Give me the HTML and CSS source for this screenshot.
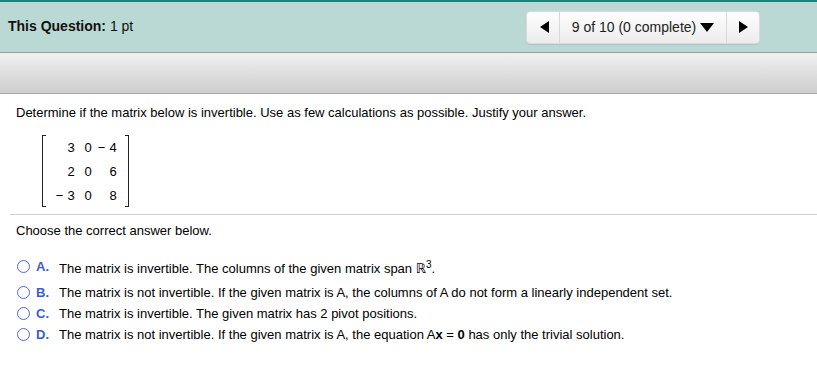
FILE: index.html
```html
<!DOCTYPE html>
<html>
<head>
<meta charset="utf-8">
<link rel="stylesheet" href="styles.css">
</head>
<body>
<div class="topbar">
  <div class="qinfo"><b>This Question:</b> 1 pt</div>
  <div class="navgroup">
    <div class="navbtn arrow"><span class="tri-left"></span></div>
    <div class="navbtn mid">9 of 10 (0 complete) <span class="tri-down"></span></div>
    <div class="navbtn arrow"><span class="tri-right"></span></div>
  </div>
</div>
<div class="toolbar"></div>
<div class="content">
  <p class="prompt">Determine if the matrix below is invertible. Use as few calculations as possible. Justify your answer.</p>
  <div class="matrix">
    <div class="bracket left"></div>
    <div class="cells">
      <span>3</span><span>0</span><span>&minus; 4</span>
      <span>2</span><span>0</span><span>6</span>
      <span>&minus; 3</span><span>0</span><span>8</span>
    </div>
    <div class="bracket right"></div>
  </div>
</div>
<div class="sep"></div>
<div class="content">
  <p class="choose">Choose the correct answer below.</p>
  <ul class="options">
    <li class="opt-a"><span class="radio"></span><span class="letter">A.</span><span class="otext">The matrix is invertible. The columns of the given matrix span <span class="bb">ℝ</span><sup>3</sup>.</span></li>
    <li><span class="radio"></span><span class="letter">B.</span><span class="otext">The matrix is not invertible. If the given matrix is A, the columns of A do not form a linearly independent set.</span></li>
    <li><span class="radio"></span><span class="letter">C.</span><span class="otext">The matrix is invertible. The given matrix has 2 pivot positions.</span></li>
    <li><span class="radio"></span><span class="letter">D.</span><span class="otext">The matrix is not invertible. If the given matrix is A, the equation A<b>x</b> = <b>0</b> has only the trivial solution.</span></li>
  </ul>
</div>
</body>
</html>
```
FILE: styles.css
```css
html, body {
  margin: 0;
  padding: 0;
  background: #fff;
}
body {
  font-family: "Liberation Sans", Arial, sans-serif;
  font-size: 13px;
  color: #000;
}
.topbar {
  border-top: 2px solid #13877a;
  background: #bad9d4;
  height: 50px;
  border-bottom: 1px solid #9a9a9a;
  display: flex;
  align-items: center;
  justify-content: space-between;
  padding-left: 8px;
  padding-right: 57px;
}
.qinfo {
  font-size: 14px;
  color: #111;
  margin-top: -3px;
}
.navgroup {
  display: flex;
  height: 31px;
  border: 1px solid #d6dcdb;
  border-radius: 4px;
  background: linear-gradient(#fefefe, #ececec);
  box-shadow: 0 1px 1px rgba(0,0,0,0.08);
}
.navbtn {
  display: flex;
  align-items: center;
  justify-content: center;
}
.navbtn.arrow {
  width: 32px;
}
.navbtn.mid {
  width: 166px;
  border-left: 1px solid #d8d8d8;
  border-right: 1px solid #d8d8d8;
  color: #222;
  font-size: 14px;
  gap: 4px;
}
.tri-left {
  width: 0; height: 0;
  border-top: 6px solid transparent;
  border-bottom: 6px solid transparent;
  border-right: 9px solid #000;
  margin-left: 3px;
}
.tri-right {
  width: 0; height: 0;
  border-top: 6px solid transparent;
  border-bottom: 6px solid transparent;
  border-left: 9px solid #000;
  margin-left: 0px;
}
.tri-down {
  width: 0; height: 0;
  border-left: 7px solid transparent;
  border-right: 7px solid transparent;
  border-top: 9px solid #000;
  margin-top: 1px;
}
.toolbar {
  height: 40px;
  background: linear-gradient(#f1f1f1, #cdcdcd);
  border-bottom: 1px solid #a8a8a8;
}
.content {
  padding-left: 16px;
}
.prompt {
  margin: 11px 0 0 0;
  line-height: 16px;
}
.matrix {
  display: flex;
  margin-left: 26px;
  margin-top: 14px;
  height: 72px;
  margin-bottom: 7px;
}
.bracket {
  width: 3px;
  border: 1px solid #222;
}
.bracket.left { border-right: none; }
.bracket.right { border-left: none; margin-left: 8px; }
.cells {
  display: grid;
  grid-template-columns: 29px 17px 25px;
  grid-auto-rows: 24px;
  align-items: center;
  justify-items: end;
  font-size: 13px;
  letter-spacing: 0.3px;
}
.sep {
  margin-left: 10px;
  height: 1px;
  background: #d0d0d0;
}
.choose {
  margin: 8px 0 0 0;
  line-height: 16px;
}
.options {
  list-style: none;
  margin: 19px 0 0 0;
  padding: 0;
}
.options li {
  display: flex;
  align-items: center;
  height: 21px;
  margin-left: 1px;
}
.options li.opt-a {
  height: 24px;
  align-items: flex-start;
}
.opt-a .radio { margin-top: 2px; }
.opt-a .letter { margin-top: 1px; }
.opt-a .otext { margin-top: 3px; }
.radio {
  width: 11px;
  height: 11px;
  border: 1px solid #4a6fd0;
  border-radius: 50%;
  background: #fff;
  flex: none;
}
.letter {
  color: #3a5fcd;
  font-weight: bold;
  width: 23px;
  margin-left: 6px;
  font-size: 13px;
}
.otext {
  color: #000;
}
.bb {
  font-family: "DejaVu Sans", sans-serif;
  font-size: 13px;
}
sup {
  font-size: 10px;
  line-height: 0;
}
```
